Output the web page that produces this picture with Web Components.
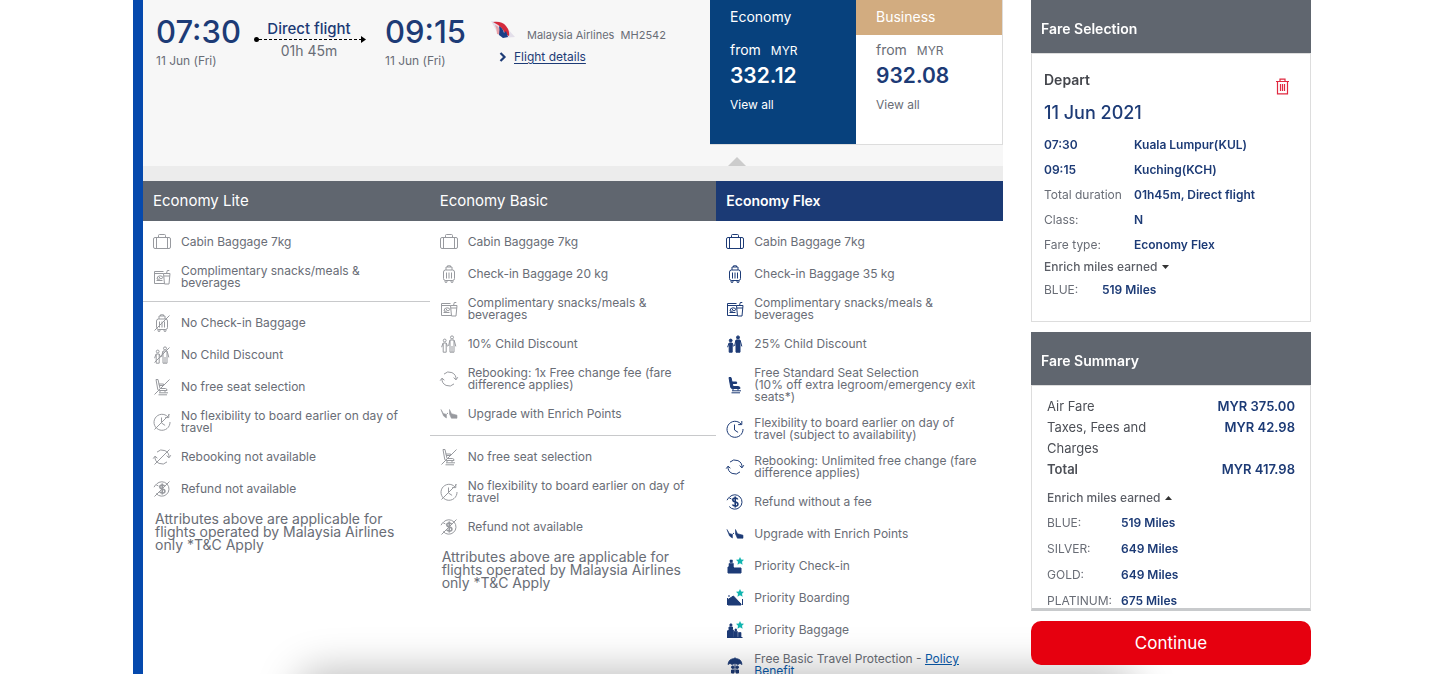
<!DOCTYPE html>
<html lang="en">
<head>
<meta charset="utf-8">
<title>Select your flight</title>
<style>
  body {
    margin: 0;
    padding-left: 11px;
    background: #fff;
    color: #696d76;
    font-family: Inter, "Open Sans", sans-serif;
    font-size: 12px;
  }
</style>
</head>
<body>
<booking-page>
  <flight-row>
    <flight-stop time="07:30" day="11 Jun (Fri)"></flight-stop>
    <flight-leg stops="Direct flight" duration="01h 45m"></flight-leg>
    <flight-stop time="09:15" day="11 Jun (Fri)"></flight-stop>
    <flight-carrier name="Malaysia Airlines" number="MH2542"></flight-carrier>
    <cabin-tile slot="cabins" name="Economy" price="332.12" selected></cabin-tile>
    <cabin-tile slot="cabins" name="Business" price="932.08"></cabin-tile>
  </flight-row>
  <fare-grid>
    <fare-column name="Economy Lite">
      <fare-feature icon="cabin">Cabin Baggage 7kg</fare-feature>
      <fare-feature icon="meal">Complimentary snacks/meals &amp; beverages</fare-feature>
      <fare-feature icon="checkin" off slot="off">No Check-in Baggage</fare-feature>
      <fare-feature icon="child" off slot="off">No Child Discount</fare-feature>
      <fare-feature icon="seat" off slot="off">No free seat selection</fare-feature>
      <fare-feature icon="clock" off slot="off">No flexibility to board earlier on day of travel</fare-feature>
      <fare-feature icon="rebook" off slot="off">Rebooking not available</fare-feature>
      <fare-feature icon="refund" off slot="off">Refund not available</fare-feature>
    </fare-column>
    <fare-column name="Economy Basic">
      <fare-feature icon="cabin">Cabin Baggage 7kg</fare-feature>
      <fare-feature icon="checkin">Check-in Baggage 20 kg</fare-feature>
      <fare-feature icon="meal">Complimentary snacks/meals &amp; beverages</fare-feature>
      <fare-feature icon="child">10% Child Discount</fare-feature>
      <fare-feature icon="rebook">Rebooking: 1x Free change fee (fare difference applies)</fare-feature>
      <fare-feature icon="upgrade">Upgrade with Enrich Points</fare-feature>
      <fare-feature icon="seat" off slot="off">No free seat selection</fare-feature>
      <fare-feature icon="clock" off slot="off">No flexibility to board earlier on day of travel</fare-feature>
      <fare-feature icon="refund" off slot="off">Refund not available</fare-feature>
    </fare-column>
    <fare-column name="Economy Flex" selected>
      <fare-feature icon="cabin">Cabin Baggage 7kg</fare-feature>
      <fare-feature icon="checkin">Check-in Baggage 35 kg</fare-feature>
      <fare-feature icon="meal">Complimentary snacks/meals &amp; beverages</fare-feature>
      <fare-feature icon="child">25% Child Discount</fare-feature>
      <fare-feature icon="seat">Free Standard Seat Selection<br>(10% off extra legroom/emergency exit seats*)</fare-feature>
      <fare-feature icon="clock">Flexibility to board earlier on day of travel (subject to availability)</fare-feature>
      <fare-feature icon="rebook">Rebooking: Unlimited free change (fare difference applies)</fare-feature>
      <fare-feature icon="refund">Refund without a fee</fare-feature>
      <fare-feature icon="upgrade">Upgrade with Enrich Points</fare-feature>
      <fare-feature icon="desk">Priority Check-in</fare-feature>
      <fare-feature icon="boarding">Priority Boarding</fare-feature>
      <fare-feature icon="bags">Priority Baggage</fare-feature>
      <fare-feature icon="cover">Free Basic Travel Protection - <a href="#policy">Policy Benefit</a></fare-feature>
    </fare-column>
  </fare-grid>
  <side-panel slot="side" heading="Fare Selection">
    <fare-selection></fare-selection>
  </side-panel>
  <side-panel slot="side" heading="Fare Summary" scroll>
    <fare-summary></fare-summary>
  </side-panel>
  <continue-button slot="side">Continue</continue-button>
</booking-page>

<script>
const slash = `<path d="M1.5 16.5 16.5 1.5"/>`;
const star = `<path d="M14 0l1.200 2.500 2.800.3-2 2 .6 2.900-2.600-1.500-2.500 1.500.5-2.900-2-2 2.800-.3z" fill="#12b5b0" stroke="none"/>`;

const icons = {
  cabin: `<rect x=".5" y="4.500" width="17" height="11" rx="1.500"/><path d="M3.500 4.500v11M14.500 4.500v11M5.500 4.500V2.500q0-1 1-1h5q1 0 1 1v2"/>`,
  checkin: `<rect x="3.500" y="5" width="11" height="10.500" rx="2"/><path d="M6.500 7.500v6M9 7.500v6M11.500 7.500v6M6 5V2h6v3M7.500 2V.8h3V2"/><circle cx="6" cy="16.600" r="1"/><circle cx="12" cy="16.600" r="1"/>`,
  meal: `<path d="M11 15.500H1.500V3.500h9M1.500 5.500h9M10.500 5.500h6.500l-1 10.500h-4.500zM13.500 5.500l.8-3h2M10.800 8h6"/><path d="M3.500 12.500h6M4 11q0-3.200 3-3.200t2.700 2q-.6 1.200-1.800.8t-1.200.6H4M6 9.500h1"/>`,
  child: `<circle cx="4.700" cy="5.500" r="1.400"/><path d="M3.200 8h3v9.200h-3zM3 8.200l-1.400 4M6.400 8.200l1 3.200"/><circle cx="12" cy="2.400" r="1.500"/><path d="M10 5h4v12.200h-4zM9.800 5.400 8.600 11M14.200 5.400l1.600 6M12 11v6"/>`,
  seat: `<path d="M3 1.500h2l2 9h5.500q1.500 0 1.500 2H6.200q-1.200 0-1.500-1.500zM5.600 6h5v1.500H6M7 12.500v2M12 12.500v2M6 14.800h9M5.500 16.800H14"/>`,
  clock: `<path d="M15 4A8 8 0 1 0 17 9M15.800 1v3.600h-3.600M8.500 4.500V10l3.600 2.400"/>`,
  rebook: `<path d="M4 4.100A7 7 0 0 1 16 9.500M14 13.900A7 7 0 0 1 2 8.500M13.600 7.600l2.400 2.200 1.800-2.600M.2 10.600 2 8.200l2.400 2"/>`,
  refund: `<path d="M3.600 4A7.200 7.200 0 1 1 3.200 13.500M1 7.200 2.800 4.500 5.400 6"/><path d="M11.700 6.400Q11.200 5 9.200 5 6.800 5 6.800 6.800t2.400 2.200q2.700.3 2.700 2.200T9.300 13q-2.200 0-2.800-1.500M9.200 3.400v11.200" stroke-width="1.600"/>`,
  upgrade: `<path d="M1 4.500 3.600 11l2.800 2V9.400L3.300 8.500zM9.500 4.500l2 4.200 5.500 1.500v3h-5.600L9.500 9z" fill="currentColor" stroke-width=".6"/><path d="M6.600 9.200 8 8"/>`,
  desk: `<path d="M2 16V10h5l1 1h7v5z" fill="currentColor"/><path d="M3 10.500V6.500h4.400v4zM4 5.500h2.400V3H4z" fill="currentColor" stroke-width=".6"/>${star}`,
  boarding: `<path d="M1.500 16V9M16.500 16v-6M3 6v2"/><path d="M2 16v-5.500L7.400 7 15 15v1z" fill="currentColor"/>${star}`,
  bags: `<path d="M1.500 16v-6l1-1h4.800v7zM3 8.500V6h3.500v2.500zM4 5V3h1.800v2z" fill="currentColor"/><path d="M8 10.500h3.400V16H8zM12.500 11.500h2.500V16h-2.500zM9 10V8h1.500v2z" fill="currentColor" stroke-width=".7"/><path d="M1 16.500h15.500"/>${star}`,
  cover: `<path d="M2 8.500Q2.500 2.500 9 2.500t7 6l-2-1.100-2 1.100-3-1.100-3 1.100-2-1.100zM9 1.200v2" fill="currentColor" stroke-width=".8"/><circle cx="6.800" cy="11.200" r="1.300" fill="currentColor"/><circle cx="11.200" cy="11.200" r="1.300" fill="currentColor"/><path d="M5.500 17V14h2.500v3zM10 17V14h2.500v3zM9 8v8" fill="currentColor"/>`
};

// these two are drawn solid in the selected fare
const filled = ["child", "seat"];

class BaseElement extends HTMLElement {
  constructor() {
    super();
    this.attachShadow({ mode: "open" });
  }
  connectedCallback() {
    this.shadowRoot.innerHTML = this.render();
  }
}

class BookingPage extends BaseElement {
  render() {
    return `
      <style>
        :host {
          display: grid;
          grid-template-columns: minmax(0, 1fr) 280px;
          gap: 28px;
          max-width: 1178px;
          height: 100vh;
          margin: 0 auto;
          overflow: hidden;
        }
        main {
          border-left: 10px solid #0549ad;
          overflow: hidden;
        }
        aside {
          display: flex;
          flex-direction: column;
          box-sizing: border-box;
          height: 100vh;
          padding-bottom: 9px;
          position: relative;
          z-index: 2;
        }
        .fade {
          position: fixed;
          z-index: 1;
          left: 21%;
          right: 21%;
          top: 100vh;
          height: 60px;
          border-radius: 20px;
          box-shadow: 0 0 40px 4px rgba(0, 0, 0, 0.26);
          pointer-events: none;
        }
      </style>
      <main><slot></slot></main>
      <aside><slot name="side"></slot></aside>
      <div class="fade"></div>`;
  }
}

class FlightRow extends BaseElement {
  render() {
    return `
      <style>
        :host {
          display: flex;
          justify-content: space-between;
          align-items: flex-start;
          height: 166px;
          background: #f7f7f7;
          border-bottom: 15px solid #ececec;
          position: relative;
        }
        .legs {
          display: grid;
          flex: 1;
          grid-template-columns: 98px 114px 123px 1fr;
          padding: 14px 0 0 13px;
        }
        ::slotted(flight-stop:nth-of-type(2)) {
          padding-left: 17px;
        }
        .cabins {
          display: grid;
          grid-template-columns: 146px 147px;
        }
        .cabins::after {
          content: "";
          position: absolute;
          bottom: 0;
          margin-left: 18px;
          border: 9px solid transparent;
          border-top: 0;
          border-bottom-color: #ccc;
        }
      </style>
      <div class="legs"><slot></slot></div>
      <div class="cabins"><slot name="cabins"></slot></div>`;
  }
}

class FlightStop extends BaseElement {
  render() {
    return `
      <style>
        :host { display: block; }
        .time {
          font-size: 31px;
          line-height: 36px;
          font-weight: 500;
          color: #1d3b76;
        }
        .day { font-size: 12px; line-height: 22px; }
      </style>
      <div class="time">${this.getAttribute("time")}</div>
      <div class="day">${this.getAttribute("day")}</div>`;
  }
}

class FlightLeg extends BaseElement {
  render() {
    return `
      <style>
        :host {
          display: block;
          text-align: center;
          padding-top: 6px;
        }
        .stops { font-size: 15px; line-height: 18px; font-weight: 500; color: #1d3b76; margin-right: 4px; }
        .time { font-size: 14px; line-height: 16px; margin-right: 4px; }
        svg { display: block; width: 100%; height: 7px; margin-top: -2px; }
      </style>
      <div class="stops">${this.getAttribute("stops")}</div>
      <svg viewBox="0 0 114 7">
        <circle cx="2.5" cy="3.5" r="2.5"/>
        <path d="M5 3.5h103" stroke="#000" stroke-dasharray="3 2"/>
        <path d="M107 0l5 3.5-5 3.5z"/>
      </svg>
      <div class="time">${this.getAttribute("duration")}</div>`;
  }
}

class FlightCarrier extends BaseElement {
  render() {
    return `
      <style>
        :host { display: block; padding-top: 6px; }
        .name { display: flex; gap: 8px; font-size: 11px; line-height: 20px; align-items: flex-end; }
        .name svg { width: 28px; height: 20px; margin-bottom: 5px; }
        .more { display: flex; gap: 7px; align-items: center; margin-top: 2px; padding-left: 8px; line-height: 20px; }
        .more svg { width: 8px; height: 10px; }
        a { color: #1d3b76; text-underline-offset: 2px; }
      </style>
      <div class="name">
        <svg viewBox="0 0 28 20">
          <path d="M0 1l9 1 7 6 8 9-12 1-6-6z" fill="#e3dfea"/>
          <path d="M2 2q9-1 13 4t3 10l-4-2Q12 7 2 2z" fill="#d42a3c"/>
          <path d="M4 5q5 1 6 10l-4-1q0-5-2-9z" fill="#e8a0a8"/>
          <path d="M8 6q4 2 5 7l2-2 2 6-5 1-4-3q1-5 0-9z" fill="#1b3e86"/>
        </svg>
        <span>${this.getAttribute("name")}&nbsp; ${this.getAttribute("number")}</span>
      </div>
      <div class="more">
        <svg viewBox="0 0 8 10" fill="none" stroke="#1d3b76" stroke-width="2.200"><path d="M1.500 1l4 4-4 4"/></svg>
        <a href="#details">Flight details</a>
      </div>`;
  }
}

class CabinTile extends BaseElement {
  render() {
    return `
      <style>
        :host {
          display: block;
          box-sizing: border-box;
          height: 145px;
          background: #fff;
          border: solid #ddd;
          border-width: 0 1px 1px 0;
        }
        .name {
          height: 35px;
          line-height: 34px;
          padding-left: 20px;
          background: #d2ac80;
          color: #fff;
          font-size: 14px;
        }
        .fare { padding: 4px 0 0 20px; }
        .from { font-size: 14px; line-height: 22px; }
        .from small { font-size: 12px; margin-left: 6px; }
        .price { font-size: 21px; line-height: 28px; font-weight: 600; color: #1d3b76; }
        a { display: block; line-height: 20px; margin-top: 5px; color: inherit; text-decoration: none; }
        :host([selected]) { background: #07417d; color: #fff; border-right: 0; }
        :host([selected]) .name { background: none; }
        :host([selected]) .price { color: #fff; }
      </style>
      <div class="name">${this.getAttribute("name")}</div>
      <div class="fare">
        <div class="from">from <small>MYR</small></div>
        <div class="price">${this.getAttribute("price")}</div>
        <a href="#fares">View all</a>
      </div>`;
  }
}

class FareGrid extends BaseElement {
  render() {
    return `
      <style>
        :host { display: grid; grid-template-columns: repeat(3, minmax(0, 1fr)); }
      </style>
      <slot></slot>`;
  }
}

class FareColumn extends BaseElement {
  render() {
    const hasOff = this.querySelector("[slot=off]");
    return `
      <style>
        :host { display: block; --icon: #989a9f; }
        :host([selected]) { --icon: #1d3b76; }
        h2 {
          margin: 0 0 5px;
          padding-left: 10px;
          font-size: 15px;
          line-height: 40px;
          font-weight: 400;
          color: #fff;
          background: #60666f;
        }
        :host([selected]) h2 { background: #1b3a75; font-size: 14px; font-weight: 600; }
        hr { margin: 5px 0; border: 0; border-top: 1px solid #c8c9cb; }
        p { margin: 7px 30px 0 12px; font-size: 14px; line-height: 13px; }
      </style>
      <h2>${this.getAttribute("name")}</h2>
      <slot></slot>
      ${hasOff ? `<hr><slot name="off"></slot>
      <p>Attributes above are applicable for flights operated by Malaysia Airlines only *T&amp;C Apply</p>` : ""}`;
  }
}

class FareFeature extends BaseElement {
  render() {
    const name = this.getAttribute("icon");
    const solid = filled.includes(name) && this.parentElement.hasAttribute("selected");
    return `
      <style>
        :host {
          display: flex;
          align-items: center;
          gap: 10px;
          padding: 7px 20px 7px 10px;
          font-size: 12px;
          line-height: 12px;
        }
        svg { flex: none; width: 18px; height: 18px; color: var(--icon); overflow: visible; }
        ::slotted(a) { color: #0a5cad; }
      </style>
      <svg viewBox="0 0 18 18" fill="${solid ? "currentColor" : "none"}" stroke="currentColor">
        ${icons[name]}${this.hasAttribute("off") ? slash : ""}
      </svg>
      <span><slot></slot></span>`;
  }
}

class SidePanel extends BaseElement {
  render() {
    return `
      <style>
        :host { display: flex; flex-direction: column; flex: none; margin-bottom: 10px; }
        :host([scroll]) { flex: 1; min-height: 0; }
        h2 {
          flex: none;
          box-sizing: border-box;
          height: 53px;
          margin: 0;
          padding: 5px 10px 0;
          font-size: 14px;
          line-height: 48px;
          font-weight: 600;
          color: #fff;
          background: #60666f;
        }
        .body { border: 1px solid #ddd; }
        :host([scroll]) .body { overflow: hidden; border-bottom: 3px solid #c8cacc; }
      </style>
      <h2>${this.getAttribute("heading")}</h2>
      <div class="body"><slot></slot></div>`;
  }
}

class MilesList extends BaseElement {
  render() {
    const open = this.hasAttribute("open");
    const rows = this.getAttribute("miles").split(",").map((row) => {
      const [tier, miles] = row.split(":");
      return `<dt>${tier}:</dt><dd>${miles} Miles</dd>`;
    });
    return `
      <style>
        :host { display: block; }
        button {
          display: flex;
          align-items: center;
          gap: 4px;
          padding: 0;
          border: 0;
          background: none;
          font: 500 12px/20px Inter, sans-serif;
          color: #5b5e66;
        }
        svg { width: 7px; height: 4px; fill: #333; }
        dl { display: grid; grid-template-columns: var(--tier-width, 58px) 1fr; margin: 0; line-height: 26px; }
        :host([open]) dl { margin-top: 2px; }
        dd { margin: 0; font-weight: 600; color: #1d3b76; }
      </style>
      <button type="button" aria-expanded="${open}">Enrich miles earned
        <svg viewBox="0 0 7 4"><path d="${open ? "M0 4l3.500-4L7 4z" : "M0 0h7L3.500 4z"}"/></svg>
      </button>
      <dl>${rows.join("")}</dl>`;
  }
}

class FareSelection extends BaseElement {
  render() {
    return `
      <style>
        :host { display: block; padding: 14px 12px 18px; }
        header { display: flex; justify-content: space-between; }
        h3 { margin: 0; font-size: 14px; line-height: 24px; font-weight: 600; color: #44464c; }
        button { margin: 10px 8px 0 0; padding: 0; border: 0; background: none; height: 17px; }
        button svg { display: block; width: 15px; height: 17px; }
        .date { margin: 4px 0 5px; font-size: 18px; line-height: 28px; font-weight: 500; color: #1d3b76; }
        dl { display: grid; grid-template-columns: 90px 1fr; margin: 0; line-height: 25px; white-space: nowrap; }
        dd { margin: 0; }
        dd, .time { font-weight: 600; color: #1d3b76; }
      </style>
      <header>
        <h3>Depart</h3>
        <button type="button" aria-label="Remove flight">
          <svg viewBox="0 0 15 17" fill="none" stroke="#e0283f" stroke-width="1.200"><path d="M1 3.500h13M5 3.500V1.200h5v2.300M2.500 3.500v12.300h10V3.500M5.500 6v7M7.500 6v7M9.500 6v7"/></svg>
        </button>
      </header>
      <div class="date">11 Jun 2021</div>
      <dl>
        <dt class="time">07:30</dt><dd>Kuala Lumpur(KUL)</dd>
        <dt class="time">09:15</dt><dd>Kuching(KCH)</dd>
        <dt>Total duration</dt><dd>01h45m, Direct flight</dd>
        <dt>Class:</dt><dd>N</dd>
        <dt>Fare type:</dt><dd>Economy Flex</dd>
      </dl>
      <miles-list miles="BLUE:519"></miles-list>`;
  }
}

class FareSummary extends BaseElement {
  render() {
    return `
      <style>
        :host { display: block; padding: 10px 15px 0; }
        table { width: 100%; border-collapse: collapse; font-size: 13px; line-height: 21px; }
        th, td { padding: 0; vertical-align: top; }
        th { width: 120px; text-align: left; font-weight: 400; color: #4c4f56; }
        td { text-align: right; font-weight: 600; color: #1d3b76; }
        tr:last-child th { font-weight: 600; }
        miles-list { margin-top: 8px; --tier-width: 74px; }
      </style>
      <table>
        <tr><th>Air Fare</th><td>MYR 375.00</td></tr>
        <tr><th>Taxes, Fees and Charges</th><td>MYR 42.98</td></tr>
        <tr><th>Total</th><td>MYR 417.98</td></tr>
      </table>
      <miles-list open miles="BLUE:519,SILVER:649,GOLD:649,PLATINUM:675"></miles-list>`;
  }
}

class ContinueButton extends BaseElement {
  render() {
    return `
      <style>
        :host { display: block; }
        button {
          width: 100%;
          height: 44px;
          border: 0;
          border-radius: 10px;
          background: #e6000f;
          color: #fff;
          font: 400 17px Inter, sans-serif;
        }
      </style>
      <button type="button"><slot></slot></button>`;
  }
}

customElements.define("booking-page", BookingPage);
customElements.define("flight-row", FlightRow);
customElements.define("flight-stop", FlightStop);
customElements.define("flight-leg", FlightLeg);
customElements.define("flight-carrier", FlightCarrier);
customElements.define("cabin-tile", CabinTile);
customElements.define("fare-grid", FareGrid);
customElements.define("fare-column", FareColumn);
customElements.define("fare-feature", FareFeature);
customElements.define("side-panel", SidePanel);
customElements.define("miles-list", MilesList);
customElements.define("fare-selection", FareSelection);
customElements.define("fare-summary", FareSummary);
customElements.define("continue-button", ContinueButton);
</script>
</body>
</html>
